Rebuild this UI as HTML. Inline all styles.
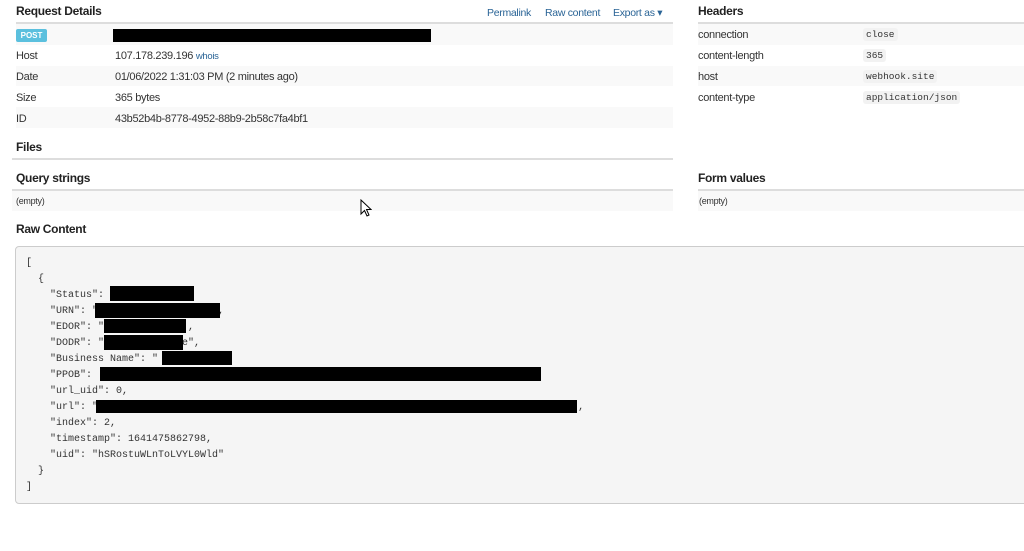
<!DOCTYPE html>
<html><head><meta charset="utf-8"><style>
*{margin:0;padding:0;box-sizing:border-box}
body{width:1024px;height:551px;background:#fff;font-family:"Liberation Sans",Arial,sans-serif;font-size:11px;color:#333;position:relative;overflow:hidden}
.a{position:absolute}
h4{position:absolute;font-size:12px;font-weight:bold;color:#222;letter-spacing:-0.3px}
.line{position:absolute;height:2px;background:#ddd}
.stripe{position:absolute;background:#f9f9f9}
.t{position:absolute;font-size:11px;color:#333;letter-spacing:-0.3px;white-space:nowrap}
.lnk{color:#2a6496}
.k{position:absolute;font-family:"Liberation Mono",monospace;font-size:9.5px;background:#f2f2f2;border-radius:3px;padding:1px 3px;color:#333}
.red{position:absolute;background:#000}
pre{position:absolute;left:26px;top:256px;font-family:"Liberation Mono",monospace;font-size:10px;line-height:16px;color:#333}
</style></head><body>
<h4 style="left:16px;top:4px">Request Details</h4>
<div class="t lnk" style="left:487px;top:7px;font-size:10.5px">Permalink</div>
<div class="t lnk" style="left:545px;top:7px;font-size:10.5px">Raw content</div>
<div class="t lnk" style="left:613px;top:7px;font-size:10.5px">Export as &#9662;</div>
<div class="line" style="left:16px;top:22px;width:657px"></div>
<div class="stripe" style="left:16px;top:24px;width:657px;height:21px"></div>
<div class="stripe" style="left:16px;top:66px;width:657px;height:20px"></div>
<div class="stripe" style="left:16px;top:107px;width:657px;height:21px"></div>
<div class="a" style="left:16px;top:29px;width:31px;height:13px;background:#5bc0de;border-radius:2px;color:#fff;font-size:8px;font-weight:bold;text-align:center;line-height:13px">POST</div>
<div class="red" style="left:113px;top:29px;width:318px;height:13px"></div>
<div class="t" style="left:16px;top:50px">Host</div><div class="t" style="left:115px;top:50px">107.178.239.196 <span class="lnk" style="font-size:9.5px">whois</span></div>
<div class="t" style="left:16px;top:71px">Date</div><div class="t" style="left:115px;top:71px">01/06/2022 1:31:03 PM (2 minutes ago)</div>
<div class="t" style="left:16px;top:92px">Size</div><div class="t" style="left:115px;top:92px">365 bytes</div>
<div class="t" style="left:16px;top:113px">ID</div><div class="t" style="left:115px;top:113px">43b52b4b-8778-4952-88b9-2b58c7fa4bf1</div>

<h4 style="left:16px;top:140px">Files</h4>
<div class="line" style="left:12px;top:158px;width:661px"></div>
<h4 style="left:16px;top:171px">Query strings</h4>
<div class="line" style="left:12px;top:189px;width:661px"></div>
<div class="stripe" style="left:12px;top:191px;width:661px;height:20px"></div>
<div class="t" style="left:16px;top:196px;font-size:9px">(empty)</div>
<svg class="a" style="left:360px;top:199px" width="12" height="19" viewBox="0 0 12 19"><path d="M1 1 L1 15 L4.5 11.5 L7 17 L9 16 L6.5 10.5 L11 10.5 Z" fill="#fff" stroke="#000" stroke-width="1"/></svg>

<h4 style="left:698px;top:4px">Headers</h4>
<div class="line" style="left:698px;top:22px;width:326px"></div>
<div class="stripe" style="left:698px;top:24px;width:326px;height:21px"></div>
<div class="stripe" style="left:698px;top:66px;width:326px;height:20px"></div>
<div class="t" style="left:698px;top:29px">connection</div><div class="k" style="left:863px;top:28px">close</div>
<div class="t" style="left:698px;top:50px">content-length</div><div class="k" style="left:863px;top:49px">365</div>
<div class="t" style="left:698px;top:71px">host</div><div class="k" style="left:863px;top:70px">webhook.site</div>
<div class="t" style="left:698px;top:92px">content-type</div><div class="k" style="left:863px;top:91px">application/json</div>
<h4 style="left:698px;top:171px">Form values</h4>
<div class="line" style="left:698px;top:189px;width:326px"></div>
<div class="stripe" style="left:698px;top:191px;width:326px;height:20px"></div>
<div class="t" style="left:699px;top:196px;font-size:9px">(empty)</div>

<h4 style="left:16px;top:222px">Raw Content</h4>
<div class="a" style="left:15px;top:246px;width:1020px;height:258px;background:#f5f5f5;border:1px solid #ccc;border-radius:4px"></div>
<pre>[
  {
    "Status": 
    "URN": "                    ,
    "EDOR": "              ,
    "DODR": "             e",
    "Business Name": "           ,
    "PPOB": 
    "url_uid": 0,
    "url": "                                                                                ,
    "index": 2,
    "timestamp": 1641475862798,
    "uid": "hSRostuWLnToLVYL0Wld"
  }
]</pre>
<div class="red" style="left:110px;top:286px;width:84px;height:15px"></div>
<div class="red" style="left:95px;top:303px;width:125px;height:15px"></div>
<div class="red" style="left:104px;top:319px;width:82px;height:14px"></div>
<div class="red" style="left:104px;top:335px;width:79px;height:15px"></div>
<div class="red" style="left:162px;top:351px;width:70px;height:14px"></div>
<div class="red" style="left:100px;top:367px;width:441px;height:14px"></div>
<div class="red" style="left:96px;top:400px;width:481px;height:13px"></div>
</body></html>
